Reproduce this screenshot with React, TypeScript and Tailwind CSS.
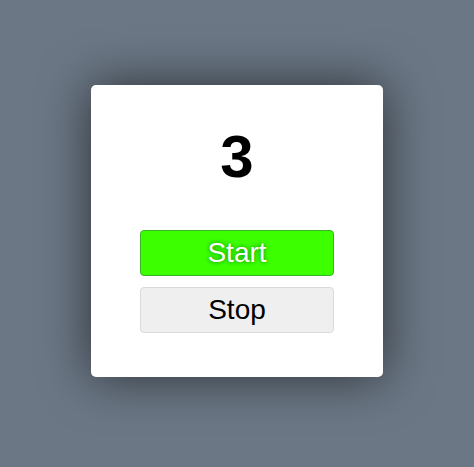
export default function App() {
  return (
    <div className="w-[474px] h-[467px] bg-[#6b7785] flex flex-col items-center pt-[85px]" style={{ fontFamily: '"Liberation Sans", Arial, sans-serif' }}>
      <div className="w-[292px] h-[292px] bg-white rounded-[5px] shadow-[0_0_50px_rgba(0,0,0,0.6)] flex flex-col items-center">
        <div className="mt-[42px] text-[60px] leading-[60px] font-bold text-black">3</div>
        <div className="mt-[43px] w-[194px] flex flex-col gap-[11px]">
          <button className="h-[46px] w-full rounded-[4px] bg-[#3cff00] border border-[#36b52a] text-white text-[28px] leading-none [text-shadow:0_0_4px_rgba(0,120,0,0.9)]">Start</button>
          <button className="h-[46px] w-full rounded-[4px] bg-[#efefef] border border-[#dadada] text-black text-[28px] leading-none">Stop</button>
        </div>
      </div>
    </div>
  );
}
